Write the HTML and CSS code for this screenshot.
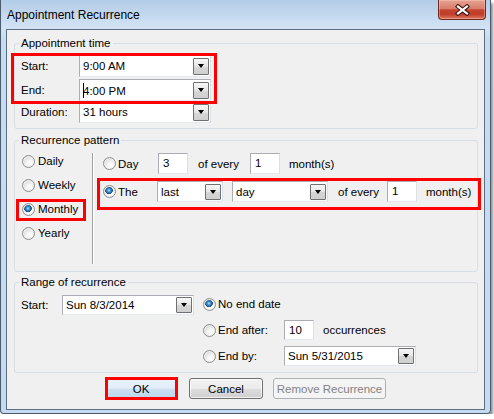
FILE: index.html
```html
<!DOCTYPE html>
<html lang="en">
<head>
    <meta charset="UTF-8">
    <title>Appointment Recurrence</title>
    <link rel="stylesheet" href="styles.css">
</head>
<body>
    <div class="window">
        <div class="titlebar">
            <span class="title">Appointment Recurrence</span>
            <div class="close">
                <svg width="15" height="12" viewBox="0 0 15 12">
                    <path d="M3 2.5 L12 9.5 M12 2.5 L3 9.5" stroke="#3a1510" stroke-width="4.2" stroke-linecap="square"/>
                    <path d="M3 2.5 L12 9.5 M12 2.5 L3 9.5" stroke="#fff" stroke-width="2.2" stroke-linecap="square"/>
                </svg>
            </div>
        </div>

        <div class="client">
            <!-- appointment time -->
            <fieldset class="group group-time">
                <legend>Appointment time</legend>
                <div class="time-rows mark mark-time">
                    <div class="trow">
                        <span class="tlabel">Start:</span>
                        <div class="combo combo-time"><span>9:00 AM</span><i class="drop"></i></div>
                    </div>
                    <div class="trow">
                        <span class="tlabel">End:</span>
                        <div class="combo combo-time"><span><span class="caret"></span>4:00 PM</span><i class="drop"></i></div>
                    </div>
                </div>
                <div class="trow">
                    <span class="tlabel">Duration:</span>
                    <div class="combo combo-time"><span>31 hours</span><i class="drop"></i></div>
                </div>
            </fieldset>

            <!-- recurrence pattern -->
            <fieldset class="group group-pattern">
                <legend>Recurrence pattern</legend>
                <div class="pattern">
                    <div class="kinds">
                        <div class="kind"><span class="radio"></span><span>Daily</span></div>
                        <div class="kind"><span class="radio"></span><span>Weekly</span></div>
                        <div class="kind mark mark-monthly"><span class="radio on"></span><span>Monthly</span></div>
                        <div class="kind"><span class="radio"></span><span>Yearly</span></div>
                    </div>
                    <div class="vsep"></div>
                    <div class="monthly">
                        <div class="mrow">
                            <div class="opt opt-month"><span class="radio"></span><span>Day</span></div>
                            <div class="tb tb-day">3</div>
                            <span class="of-day">of every</span>
                            <div class="tb">1</div>
                            <span class="unit">month(s)</span>
                        </div>
                        <div class="mrow mrow-the mark mark-the">
                            <div class="opt opt-month"><span class="radio on"></span><span>The</span></div>
                            <div class="combo combo-which"><span>last</span><i class="drop"></i></div>
                            <div class="combo combo-what"><span>day</span><i class="drop"></i></div>
                            <span class="of-the">of every</span>
                            <div class="tb">1</div>
                            <span class="unit">month(s)</span>
                        </div>
                    </div>
                </div>
            </fieldset>

            <!-- range of recurrence -->
            <fieldset class="group group-range">
                <legend>Range of recurrence</legend>
                <div class="range">
                    <div class="range-start">
                        <span class="rlabel">Start:</span>
                        <div class="combo combo-date"><span>Sun 8/3/2014</span><i class="drop"></i></div>
                    </div>
                    <div class="range-end">
                        <div class="rrow">
                            <div class="opt opt-end"><span class="radio on"></span><span>No end date</span></div>
                        </div>
                        <div class="rrow">
                            <div class="opt opt-end"><span class="radio"></span><span>End after:</span></div>
                            <div class="tb tb-small">10</div>
                            <span class="unit">occurrences</span>
                        </div>
                        <div class="rrow">
                            <div class="opt opt-end"><span class="radio"></span><span>End by:</span></div>
                            <div class="combo combo-date"><span>Sun 5/31/2015</span><i class="drop"></i></div>
                        </div>
                    </div>
                </div>
            </fieldset>

            <div class="buttons">
                <button class="btn btn-ok mark mark-ok">OK</button>
                <button class="btn btn-cancel">Cancel</button>
                <button class="btn btn-remove" disabled>Remove Recurrence</button>
            </div>
        </div>
    </div>
</body>
</html>
```

FILE: styles.css
```css
*,
*::before,
*::after {
    box-sizing: border-box;
}
body {
    margin: 0;
    background: #fff;
    font-family: "Liberation Sans", Arial, sans-serif;
    font-size: 11.5px;
    color: #000;
}

/* window frame */
.window {
    width: 491px;
    height: 414px;
    background: linear-gradient(#b3cce7 0, #d3e3f5 28px, #c5dcf3 40px, #c3daf2 100%);
    border: 1px solid #4b5b6d;
    border-top: none;
    border-radius: 0 0 4px 4px;
    box-shadow: 2px 3px 3px rgba(0, 0, 0, 0.45);
}
.titlebar {
    height: 29px;
    display: flex;
    justify-content: space-between;
    align-items: flex-start;
}
.title {
    padding: 8px 0 0 6px;
    line-height: 14px;
    font-size: 12px;
}
.close {
    width: 48px;
    height: 20px;
    margin-right: 4px;
    border: 1px solid #6e2b22;
    border-top: none;
    border-radius: 0 0 4px 4px;
    background: linear-gradient(#e6a394 0%, #d97e6b 45%, #c5432f 52%, #c13d2a 75%, #dc7a62 100%);
    box-shadow: inset 0 0 0 1px rgba(255, 220, 210, 0.35);
    display: flex;
    align-items: center;
    justify-content: center;
}
.client {
    height: 381px;
    margin: 0 5px 0 5px;
    background: #f0f0f0;
    border: 1px solid #5d6e7f;
}

/* group boxes */
.group {
    margin: 0 6px 0 7px;
    padding: 0;
    min-width: 0;
    border: 1px solid #d5dfe5;
    border-radius: 3px;
}
.group legend {
    margin-left: 4px;
    padding: 0 2px;
    line-height: 14px;
}
.group-time {
    margin-top: 6px;
    padding: 5px 0 5px 0;
}
.group-pattern {
    margin-top: 4px;
}
.group-range {
    margin-top: 3px;
    padding: 2px 0 3px 0;
}

/* the red marks drawn over the dialog */
.mark {
    position: relative;
}
.mark::after {
    content: "";
    position: absolute;
    border: 3px solid #f00;
    pointer-events: none;
}
.mark-time::after {
    left: -4px;
    top: -2px;
    width: 206px;
    height: 51px;
}
.mark-monthly::after {
    left: 1px;
    top: 2px;
    width: 70px;
    height: 22px;
}
.mark-the::after {
    left: -6px;
    top: -3px;
    width: 384px;
    height: 32px;
}
.mark-ok::after {
    left: -1px;
    top: -2px;
    width: 73px;
    height: 23px;
}

/* inputs */
.trow {
    display: flex;
    align-items: center;
    margin-bottom: 2px;
    padding-left: 6px;
}
.trow:last-child {
    margin-bottom: 0;
}
.tlabel {
    width: 58px;
}
.combo {
    height: 22px;
    display: flex;
    align-items: center;
    justify-content: space-between;
    background: #fff;
    border: 1px solid #abadb3;
    border-right-color: #dbdfe6;
    border-bottom-color: #e3e9ef;
    padding-left: 3px;
}
.combo-time {
    width: 132px;
}
.combo-which {
    width: 66px;
    height: 21px;
}
.combo-what {
    width: 96px;
    height: 21px;
    margin-left: 9px;
}
.combo-date {
    width: 132px;
    height: 20px;
}
.drop {
    width: 16px;
    height: 17px;
    margin-right: 1px;
    border: 1px solid #707070;
    border-radius: 1px;
    background: linear-gradient(#f6f6f6, #e6e6e6 50%, #d6d6d6 51%, #cfcfcf);
    display: flex;
    align-items: center;
    justify-content: center;
}
.combo-which .drop,
.combo-what .drop {
    height: 16px;
}
.combo-date .drop {
    height: 16px;
}
.drop::after {
    content: "";
    border-left: 3.5px solid transparent;
    border-right: 3.5px solid transparent;
    border-top: 4px solid #000;
}
.caret {
    display: inline-block;
    width: 1px;
    height: 15px;
    margin-right: -1px;
    background: #000;
    vertical-align: -3px;
}
.tb {
    width: 30px;
    height: 21px;
    padding-left: 4px;
    line-height: 19px;
    background: #fff;
    border: 1px solid #abadb3;
    border-right-color: #dbdfe6;
    border-bottom-color: #e3e9ef;
}
.tb-small {
    height: 20px;
    line-height: 18px;
}
.radio {
    width: 13px;
    height: 13px;
    flex: none;
    border: 1px solid #8e8f8f;
    border-radius: 50%;
    background: radial-gradient(circle at 65% 70%, #fff 0, #f4f4f4 35%, #d5d5d5 80%);
    box-shadow: inset 0 0 0 1px #f2f2f2;
}
.radio.on {
    background:
        radial-gradient(circle at 45% 40%, #b6e3ff 0, #4b9ad8 1.5px, #1e5f9e 3px, #1c4a76 3.6px, transparent 4px),
        radial-gradient(circle at 65% 70%, #fff 0, #f4f4f4 35%, #d5d5d5 80%);
}

/* recurrence pattern */
.pattern {
    height: 124px;
    display: flex;
}
.kinds {
    width: 77px;
    padding-top: 2px;
}
.kind {
    height: 24px;
    display: flex;
    align-items: center;
    padding-left: 7px;
}
.kind .radio {
    margin-right: 3px;
}
.vsep {
    width: 1px;
    height: 111px;
    margin-top: 6px;
    background: #a0a0a0;
    box-shadow: 1px 0 0 #fff;
}
.monthly {
    padding: 6px 0 0 10px;
}
.mrow {
    height: 21px;
    display: flex;
    align-items: center;
}
.mrow-the {
    margin-top: 7px;
}
.opt {
    display: flex;
    align-items: center;
}
.opt .radio {
    margin-right: 2px;
}
.opt-month {
    width: 54px;
}
.tb-day {
    margin-left: 1px;
}
.of-day {
    width: 52px;
    margin-left: 10px;
}
.of-the {
    width: 49px;
    margin-left: 10px;
}
.unit {
    margin-left: 9px;
}

/* range of recurrence */
.range {
    display: flex;
    padding-left: 6px;
}
.range-start {
    height: 26px;
    padding-top: 1px;
    display: flex;
    align-items: center;
}
.rlabel {
    width: 41px;
}
.range-end {
    margin-left: 9px;
}
.rrow {
    height: 26px;
    display: flex;
    align-items: center;
}
.opt-end {
    width: 81px;
}

/* push buttons */
.buttons {
    display: flex;
    margin-top: 5px;
    padding-left: 98px;
}
.btn {
    height: 21px;
    padding: 0;
    font: inherit;
    color: #000;
    border: 1px solid #707070;
    border-radius: 3px;
    background: linear-gradient(#f2f2f2 0%, #ebebeb 50%, #dddddd 51%, #cfcfcf 100%);
    box-shadow: inset 0 0 0 1px rgba(255, 255, 255, 0.7);
}
.btn-ok {
    width: 72px;
    border-color: #3c7fb1;
    background: linear-gradient(#eaf3fb 0%, #dfecf8 50%, #cbe0f2 51%, #bcd6ee 100%);
}
.btn-cancel {
    width: 74px;
    margin-left: 12px;
}
.btn-remove {
    width: 113px;
    margin-left: 10px;
    color: #838383;
    border-color: #adb2b5;
    background: #f4f4f4;
    box-shadow: none;
}
```
